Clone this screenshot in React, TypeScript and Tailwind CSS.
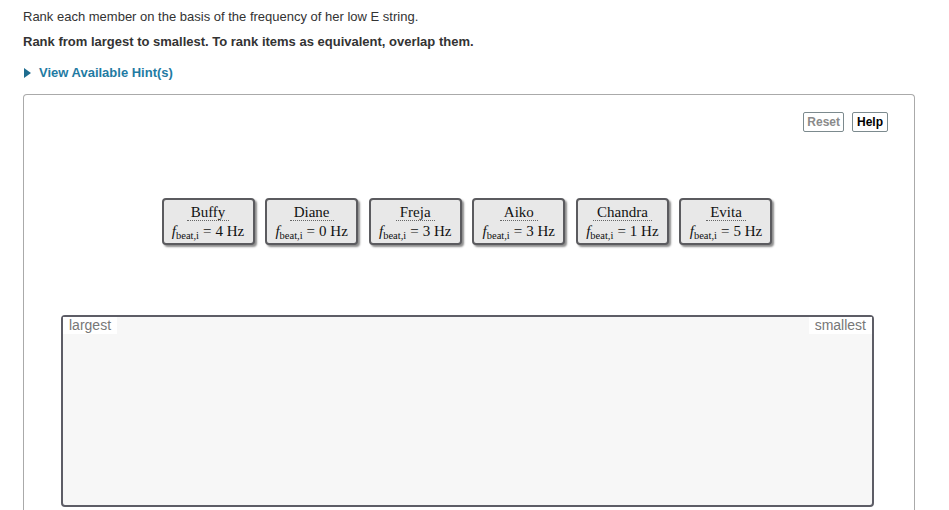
import React from 'react';

type Member = { name: string; beat: number };

const members: Member[] = [
    { name: 'Buffy', beat: 4 },
    { name: 'Diane', beat: 0 },
    { name: 'Freja', beat: 3 },
    { name: 'Aiko', beat: 3 },
    { name: 'Chandra', beat: 1 },
    { name: 'Evita', beat: 5 },
];

const MemberCard: React.FC<{ member: Member }> = ({ member }) => (
    <div className="w-[93px] h-[47px] shrink-0 rounded-[4px] border-2 border-[#5b5b5f] bg-[#e8e8e8] shadow-[2px_2px_2px_rgba(0,0,0,0.45)] flex flex-col items-center justify-center font-['Liberation_Serif',serif] text-[#111]">
        <div className="px-[4px] text-[15px] leading-[16px] border-b border-dotted border-[#666]">{member.name}</div>
        <div className="mt-[1px] text-[15px] leading-[18px] whitespace-nowrap">
            <span className="italic">f</span>
            <span className="text-[10.5px] leading-none relative top-[3px]">beat,i</span>
            <span className="mx-[4px]">=</span>
            {member.beat} Hz
        </div>
    </div>
);

export default function App() {
    return (
        <div className="w-[949px] h-[510px] overflow-hidden bg-white font-['Liberation_Sans',Arial,sans-serif] text-[13px] text-[#333]">
            <div className="pl-[23px] pt-[9px]">
                <p className="leading-[16px]">Rank each member on the basis of the frequency of her low E string.</p>
                <p className="mt-[9px] leading-[16px] font-bold">Rank from largest to smallest. To rank items as equivalent, overlap them.</p>
                <div className="mt-[15px] flex items-center gap-[8px] text-[#1f7ba3] font-bold leading-[16px]">
                    <svg width="7" height="10" viewBox="0 0 7 10" className="ml-[1px]">
                        <path d="M0 0 L7 5 L0 10 Z" fill="#1f6d8f" />
                    </svg>
                    <span>View Available Hint(s)</span>
                </div>
            </div>

            <div className="ml-[23px] mt-[13px] w-[892px] h-[440px] rounded-t-[4px] border border-[#aaaaaa] border-b-0">
                <div className="flex justify-end gap-[8px] pr-[26px] pt-[17px]">
                    <button className="h-[20px] px-[3px] rounded-[2px] border border-[#7c8a8e] text-[12px] font-bold leading-[18px] text-[#8a8a8a]">Reset</button>
                    <button className="h-[20px] px-[4px] rounded-[2px] border border-[#7c8a8e] text-[12px] font-bold leading-[18px] text-black">Help</button>
                </div>

                <div className="mt-[66px] flex justify-center gap-[10.6px] pr-[4px]">
                    {members.map((m) => (
                        <MemberCard key={m.name} member={m} />
                    ))}
                </div>

                <div className="mt-[70px] ml-[37px] w-[813px] h-[192px] rounded-[4px] border-2 border-[#5d5d66] bg-[#f7f7f7] flex justify-between items-start">
                    <span className="bg-white px-[6px] text-[14px] leading-[17px] text-[#777]">largest</span>
                    <span className="bg-white px-[6px] text-[14px] leading-[17px] text-[#777]">smallest</span>
                </div>
            </div>
        </div>
    );
}
